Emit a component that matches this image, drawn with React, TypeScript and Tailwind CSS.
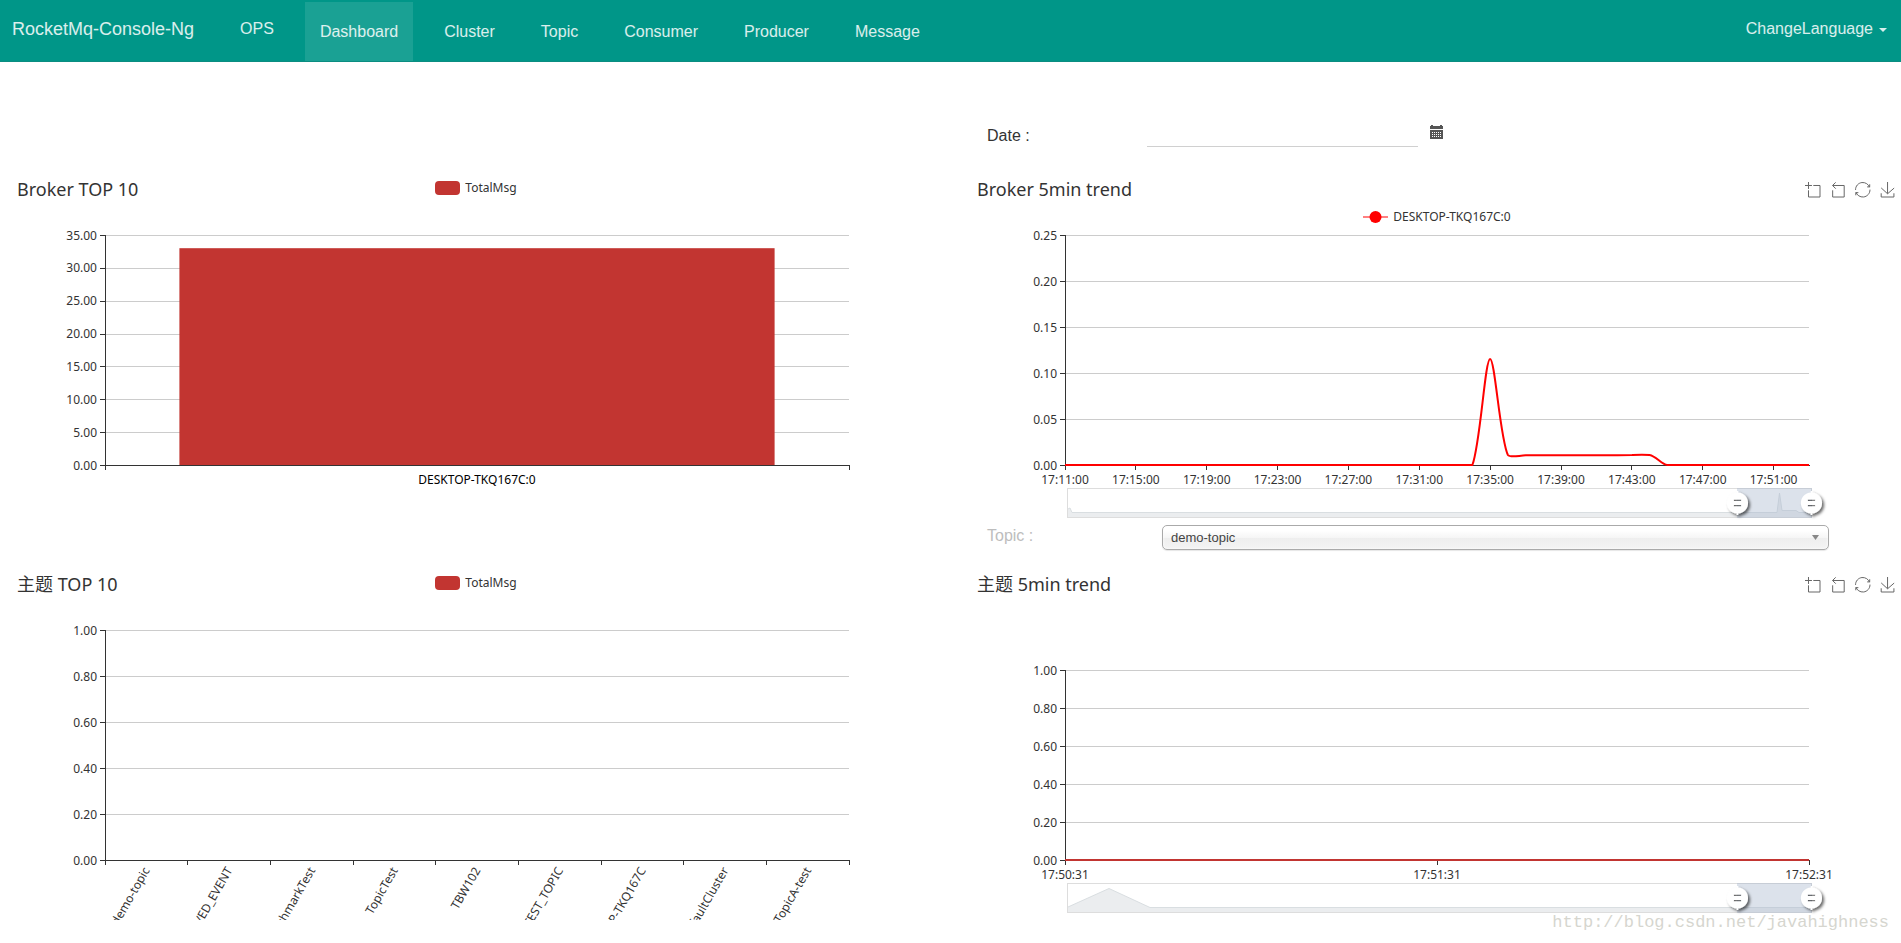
import type { ReactNode } from "react";

const TABS = ["Dashboard", "Cluster", "Topic", "Consumer", "Producer", "Message"];

const TOPICS = [
  "demo-topic",
  "OFFSET_MOVED_EVENT",
  "BenchmarkTest",
  "TopicTest",
  "TBW102",
  "SELF_TEST_TOPIC",
  "DESKTOP-TKQ167C",
  "DefaultCluster",
  "TopicA-test",
];

const TREND_TIMES = [
  "17:11:00",
  "17:15:00",
  "17:19:00",
  "17:23:00",
  "17:27:00",
  "17:31:00",
  "17:35:00",
  "17:39:00",
  "17:43:00",
  "17:47:00",
  "17:51:00",
];

/* Plot area, in chart units. The svg starts below the title and legend rows. */
const LEFT = 93;
const RIGHT = 837;
const BOTTOM = 290;
const PLOT_WIDTH = RIGHT - LEFT;

export default function App() {
  return (
    <div className="relative min-h-screen overflow-x-clip bg-white font-['Liberation_Sans',Arial,sans-serif] text-base text-[#333]">
      <Navbar />

      <main className="-mr-px ml-3 grid grid-cols-2 gap-x-[30px]">
        <DateField />

        <BrokerTop />
        <BrokerTrend />

        <TopicField />

        <TopicTop />
        <TopicTrend />
      </main>

      <p className="absolute bottom-2 right-3 font-['Liberation_Mono',monospace] text-[17px] leading-6 text-[#d6d6cf]">
        http://blog.csdn.net/javahighness
      </p>
    </div>
  );
}

function Navbar() {
  return (
    <header className="flex h-[62px] items-start border-b border-[#0b8d81] bg-[#009688] px-3 text-white/85">
      <a href="#" className="flex h-[58px] items-center text-lg">
        RocketMq-Console-Ng
      </a>
      <a href="#ops" className="ml-[46px] flex h-[58px] items-center">
        OPS
      </a>
      <nav className="ml-[31px] flex gap-4 pt-[2px]">
        {TABS.map((tab) => (
          <a
            key={tab}
            href={`#${tab.toLowerCase()}`}
            aria-current={tab === "Dashboard" ? "page" : undefined}
            className="flex h-[59px] items-center px-[15px] aria-[current=page]:bg-white/10"
          >
            {tab}
          </a>
        ))}
      </nav>
      <button type="button" className="ml-auto mr-[2px] flex h-[58px] items-center gap-[6px]">
        ChangeLanguage
        <svg width="8" height="4" viewBox="0 0 8 4" fill="currentColor" className="mt-[2px]">
          <path d="M0 0h8L4 4z" />
        </svg>
      </button>
    </header>
  );
}

/* ── Filters ── */

function DateField() {
  return (
    <div className="col-start-2 flex h-[113px] items-end pb-7 pl-[15px]">
      <label htmlFor="date" className="w-40 leading-[22px]">
        Date :
      </label>
      <input
        id="date"
        type="text"
        className="h-[30px] w-[271px] border-b border-[#d0d0d0] bg-transparent outline-none"
      />
      <button type="button" aria-label="Pick a date" className="ml-3 flex h-[30px] items-center">
        <svg width="13" height="14" viewBox="0 0 13 14" fill="#555">
          <path d="M0 1h1V0h2v1h7V0h2v1h1v3H0z" />
          <path
            fillRule="evenodd"
            d="M0 5h13v9H0zM2 7v1h1V7zm2 0v1h1V7zm2 0v1h1V7zm2 0v1h1V7zm2 0v1h1V7zM2 9v1h1V9zm2 0v1h1V9zm2 0v1h1V9zm2 0v1h1V9zm2 0v1h1V9zM2 11v1h1v-1zm2 0v1h1v-1zm2 0v1h1v-1zm2 0v1h1v-1zm2 0v1h1v-1z"
          />
        </svg>
      </button>
    </div>
  );
}

function TopicField() {
  return (
    <div className="col-start-2 flex h-[45px] items-start pl-[15px] pr-[73px]">
      <label htmlFor="topic" className="w-[175px] leading-[22px] text-[#bdbdbd]">
        Topic :
      </label>
      <div className="relative flex-1">
        <select
          id="topic"
          className="h-[25px] w-full appearance-none rounded-[5px] border border-[#aaa] bg-[linear-gradient(#fff_20%,#f6f6f6_50%,#eee_52%,#f4f4f4_100%)] px-2 text-[13px] text-[#444] shadow-[inset_0_0_3px_#fff,0_1px_1px_rgba(0,0,0,0.1)]"
        >
          {TOPICS.map((topic) => (
            <option key={topic}>{topic}</option>
          ))}
        </select>
        <svg
          width="7"
          height="5"
          viewBox="0 0 7 5"
          fill="#888"
          className="pointer-events-none absolute right-[10px] top-[10px]"
        >
          <path d="M0 0h7L3.500 5z" />
        </svg>
      </div>
    </div>
  );
}

/* ── Chart shell: title row, legend row, plot ── */

type ChartProps = {
  title: string;
  legend?: ReactNode;
  subLegend?: ReactNode;
  tools?: boolean;
  children: ReactNode;
};

function Chart({ title, legend, subLegend, tools, children }: ChartProps) {
  return (
    <section className="font-['Noto_Sans','Noto_Sans_CJK_SC',sans-serif] text-xs">
      <div className="grid h-7 grid-cols-[1fr_auto_1fr] items-center pl-[5px] pr-[7px]">
        <h2 className="text-lg leading-7">{title}</h2>
        <div className="pb-[2px]">{legend}</div>
        {tools && <Toolbox />}
      </div>
      <div className="flex h-[22px] items-end justify-center">{subLegend}</div>
      <svg viewBox="0 50 930 300" className="block h-auto w-full" fontSize="12" fill="#333">
        {children}
      </svg>
    </section>
  );
}

function BarLegend({ label }: { label: string }) {
  return (
    <span className="flex items-center gap-[5px]">
      <span className="h-[14px] w-[25px] rounded-[4px] bg-[#c23531]" />
      {label}
    </span>
  );
}

function LineLegend({ label }: { label: string }) {
  return (
    <span className="flex items-center gap-[5px]">
      <svg width="25" height="14" viewBox="0 0 25 14">
        <path d="M0 7h25" stroke="#ff8080" strokeWidth="2" />
        <circle cx="12.500" cy="7" r="6" fill="#f00" />
      </svg>
      {label}
    </span>
  );
}

const TOOLS = [
  { name: "Zoom", path: "M0,13.5h26.9 M13.5,26.9V0 M32.1,13.5H58V58H13.5 V32.1" },
  { name: "Zoom reset", path: "M22,1.4L9.9,13.5l12.3,12.3 M10.3,13.5H54.9v44.6 H10.3v-26" },
  {
    name: "Restore",
    path: "M47,18.9h9.8V8.7 M56.3,20.1 C52.1,9,40.5,0.6,26.8,2.1C12.6,3.7,1.6,16.2,2.1,30.6 M13,41.1H3.1v10.2 M3.7,39.9c4.2,11.1,15.8,19.5,29.5,18 c14.2-1.6,25.2-14.1,24.7-28.5",
  },
  {
    name: "Save as image",
    path: "M4.7,22.9L29.3,45.5L54.7,23.4M4.6,43.6L4.6,58L53.8,58L53.8,43.6M29.2,45.1L29.2,0",
  },
];

function Toolbox() {
  return (
    <div className="flex items-center justify-end gap-[10px]">
      {TOOLS.map((tool) => (
        <button key={tool.name} type="button" aria-label={tool.name}>
          <svg
            width="15"
            height="15"
            viewBox="0 0 58 58"
            fill="none"
            stroke="#666"
            className="block overflow-visible"
          >
            <path d={tool.path} vectorEffect="non-scaling-stroke" />
          </svg>
        </button>
      ))}
    </div>
  );
}

/* ── Plot parts ── */

function YAxis({ top, labels }: { top: number; labels: string[] }) {
  const step = (BOTTOM - top) / (labels.length - 1);
  return (
    <g>
      {labels.map((label, i) => {
        const y = BOTTOM - i * step;
        const line = Math.round(y) + 0.5;
        return (
          <g key={label}>
            {i > 0 && <path d={`M${LEFT} ${line}H${RIGHT}`} stroke="#ccc" />}
            <path d={`M${LEFT - 5} ${line}h5`} stroke="#333" />
            <text x={LEFT - 8} y={y} textAnchor="end" dominantBaseline="central">
              {label}
            </text>
          </g>
        );
      })}
    </g>
  );
}

function AxisLines({ top, ticks }: { top: number; ticks: number[] }) {
  return (
    <g stroke="#333" fill="none">
      <path d={`M${LEFT + 0.5} ${top}V${BOTTOM}`} />
      <path d={`M${LEFT} ${BOTTOM + 0.5}H${RIGHT + 1}`} />
      {ticks.map((x) => (
        <path key={x} d={`M${Math.floor(x) + 0.5} ${BOTTOM}v5`} />
      ))}
    </g>
  );
}

const HANDLE =
  "M10.7,11.9v-1.3H9.3v1.3c-4.9,0.3-8.8,4.4-8.8,9.4c0,5,3.9,9.1,8.8,9.4v1.3h1.3v-1.3c4.9-0.3,8.8-4.4,8.8-9.4C19.5,16.3,15.6,12.2,10.7,11.9z M13.3,24.4H6.7V23h6.6V24.4z M13.3,19.6H6.7v-1.4h6.6V19.6z";

function DataZoom({ id, shadow }: { id: string; shadow: string }) {
  return (
    <g>
      <filter id={id} x="-50%" y="-50%" width="200%" height="200%">
        <feDropShadow dx="2" dy="2" stdDeviation="1.500" floodColor="#000" floodOpacity="0.600" />
      </filter>
      <path d={`${shadow}V343H96z`} fill="#ebedef" />
      <path d={shadow} fill="none" stroke="#d9dee1" />
      <rect x="95.500" y="313.500" width="744" height="29" fill="none" stroke="#ddd" />
      <rect x="765" y="313" width="75" height="30" fill="#a7b7cc" fillOpacity="0.400" />
      {[765.5, 839.5].map((x) => (
        <g key={x} filter={`url(#${id})`}>
          <path d={HANDLE} fill="#fff" transform={`translate(${x} 328) scale(1.12) translate(-10 -21.3)`} />
        </g>
      ))}
    </g>
  );
}

/* ── The four charts ── */

function BrokerTop() {
  return (
    <Chart title="Broker TOP 10" legend={<BarLegend label="TotalMsg" />}>
      <YAxis
        top={60}
        labels={["0.00", "5.00", "10.00", "15.00", "20.00", "25.00", "30.00", "35.00"]}
      />
      <rect x="167.400" y="73.200" width="595.200" height="216.800" fill="#c23531" />
      <AxisLines top={60} ticks={[LEFT, RIGHT]} />
      <text x="465" y="304" textAnchor="middle" dominantBaseline="central" fill="#000">
        DESKTOP-TKQ167C:0
      </text>
    </Chart>
  );
}

function BrokerTrend() {
  // one sample a minute, 17:11 to 17:53
  const minute = PLOT_WIDTH / 42;
  const ticks = TREND_TIMES.map((_, i) => LEFT + i * 4 * minute);
  return (
    <Chart
      title="Broker 5min trend"
      subLegend={<LineLegend label="DESKTOP-TKQ167C:0" />}
      tools
    >
      <YAxis top={60} labels={["0.00", "0.05", "0.10", "0.15", "0.20", "0.25"]} />
      <AxisLines top={60} ticks={ticks} />
      {ticks.map((x, i) => (
        <text key={x} x={x} y="304" textAnchor="middle" dominantBaseline="central">
          {TREND_TIMES[i]}
        </text>
      ))}
      <path
        d="M93 290H500.400C508.500 268 513 184 518.100 184C523 184 528 264 535.900 280C538 283 547 280.500 553.600 280.300C600 280 640 280.400 660 280C667 279.700 671 279.500 677.600 280C684 281 690 290 695.300 290H837"
        fill="none"
        stroke="#f00"
        strokeWidth="2"
      />
      <DataZoom
        id="broker-handle"
        shadow="M96 334L98 333L100 337.500H805L807.500 318L810 335.500H824L827 337.500H840"
      />
    </Chart>
  );
}

function TopicTop() {
  const band = PLOT_WIDTH / TOPICS.length;
  const ticks = [...TOPICS, ""].map((_, i) => LEFT + i * band);
  return (
    <Chart title="主题 TOP 10" legend={<BarLegend label="TotalMsg" />}>
      <YAxis top={60} labels={["0.00", "0.20", "0.40", "0.60", "0.80", "1.00"]} />
      <AxisLines top={60} ticks={ticks} />
      {TOPICS.map((topic, i) => (
        <text
          key={topic}
          textAnchor="end"
          dominantBaseline="central"
          transform={`translate(${LEFT + (i + 0.5) * band} 298) rotate(-60)`}
        >
          {topic}
        </text>
      ))}
    </Chart>
  );
}

function TopicTrend() {
  const times = ["17:50:31", "17:51:31", "17:52:31"];
  const ticks = times.map((_, i) => LEFT + (i * PLOT_WIDTH) / 2);
  return (
    <Chart title="主题 5min trend" tools>
      <YAxis top={100} labels={["0.00", "0.20", "0.40", "0.60", "0.80", "1.00"]} />
      <AxisLines top={100} ticks={ticks} />
      {ticks.map((x, i) => (
        <text key={x} x={x} y="304" textAnchor="middle" dominantBaseline="central">
          {times[i]}
        </text>
      ))}
      <path d={`M${LEFT} ${BOTTOM}H${RIGHT}`} stroke="#c23531" strokeWidth="2" />
      <DataZoom id="topic-handle" shadow="M96 337L137 318.500L178 337.500H840" />
    </Chart>
  );
}
